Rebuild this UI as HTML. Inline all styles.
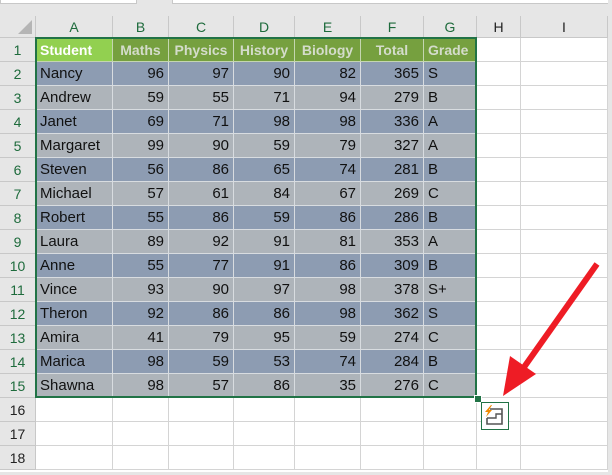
<!DOCTYPE html>
<html><head><style>
body{margin:0;width:612px;height:475px;overflow:hidden;background:#fff;font-family:"Liberation Sans",sans-serif;position:relative}
.top{position:absolute;left:0;top:0;width:612px;height:16px;background:#e6e6e6}
.hdr{position:absolute;top:16px;height:22px;background:#e6e6e6;border-right:1px solid #c8c8c8;border-bottom:1px solid #c8c8c8;box-sizing:border-box;text-align:center;font-size:14px;line-height:22px;color:#222}
.rh{position:absolute;left:0;width:36px;height:24px;background:#e6e6e6;border-bottom:1px solid #c8c8c8;border-right:1px solid #c8c8c8;box-sizing:border-box;text-align:center;font-size:14px;line-height:24px;color:#222}
.sel{color:#1e6b3c}
.c{position:absolute;height:24px;box-sizing:border-box;border-right:1px solid #d4d4d4;border-bottom:1px solid #d4d4d4;font-size:15px;line-height:24px;padding:0 4px;white-space:nowrap;overflow:hidden;color:#111}
.r{text-align:right}
.ctr{text-align:center;padding:0}
</style></head><body>
<div class="top"><div style="position:absolute;left:0;top:0;width:135px;height:3px;border:1px solid #c8c8c8;border-top:none;background:#fff"></div><div style="position:absolute;left:172px;top:0;width:440px;height:3px;border:1px solid #c8c8c8;border-top:none;background:#fff"></div></div>
<div class="hdr" style="left:0;width:36px"><div style="position:absolute;right:3px;bottom:3px;width:0;height:0;border-left:14px solid transparent;border-bottom:14px solid #b5b5b5"></div></div>
<div id="g"></div>
<script>
const cols=[[36,113,'A'],[113,169,'B'],[169,234,'C'],[234,295,'D'],[295,361,'E'],[361,424,'F'],[424,477,'G'],[477,521,'H'],[521,608,'I']];
const data=[["Student","Maths","Physics","History","Biology","Total","Grade"],
["Nancy",96,97,90,82,365,"S"],["Andrew",59,55,71,94,279,"B"],["Janet",69,71,98,98,336,"A"],["Margaret",99,90,59,79,327,"A"],["Steven",56,86,65,74,281,"B"],["Michael",57,61,84,67,269,"C"],["Robert",55,86,59,86,286,"B"],["Laura",89,92,91,81,353,"A"],["Anne",55,77,91,86,309,"B"],["Vince",93,90,97,98,378,"S+"],["Theron",92,86,86,98,362,"S"],["Amira",41,79,95,59,274,"C"],["Marica",98,59,53,74,284,"B"],["Shawna",98,57,86,35,276,"C"]];
let h='';
cols.forEach((c,i)=>{h+=`<div class="hdr ${i<7?'sel':''}" style="left:${c[0]}px;width:${c[1]-c[0]}px">${c[2]}</div>`});
for(let r=0;r<18;r++){const y=38+r*24;
h+=`<div class="rh ${r<15?'sel':''}" style="top:${y}px">${r+1}</div>`;
cols.forEach((c,i)=>{let bg='#fff',txt='',cls='c',st='';
if(r<15&&i<7){txt=data[r][i];
 if(r==0){bg=i==0?'#92d050':'#76a03f';st='font-weight:bold;font-size:14px;color:'+(i==0?'#fff':'#d4dccb')+';border-color:#c4d6b0;';if(i>0&&i<6)cls+=' ctr';}
 else{bg=r%2==1?'#8d9cb2':'#aeb4ba';st='border-color:#d8dce0;';if(i>0&&i<6)cls+=' r';}
}
h+=`<div class="${cls}" style="left:${c[0]}px;top:${y}px;width:${c[1]-c[0]}px;background:${bg};${st}">${txt}</div>`;});}
document.getElementById('g').innerHTML=h;
</script>
<div style="position:absolute;left:35px;top:37px;width:442px;height:361px;border:2px solid #217346;box-sizing:border-box"></div>
<div style="position:absolute;left:474px;top:395px;width:6px;height:6px;background:#217346;border:1px solid #fff"></div>
<div style="position:absolute;left:608px;top:0;width:4px;height:475px;background:#e6e6e6"></div>
<div style="position:absolute;left:0;top:472px;width:612px;height:3px;background:#e6e6e6"></div>
<div style="position:absolute;left:481px;top:402px;width:28px;height:28px;border:1px solid #217346;box-sizing:border-box;background:#fff">
<svg width="26" height="26" viewBox="0 0 26 26" style="position:absolute;left:0;top:0"><path d="M8 6h12v15H5v-6" fill="none" stroke="#555" stroke-width="1.6"/><path d="M5 15h9v-4h6" fill="none" stroke="#555" stroke-width="1.4"/><path d="M9 2l-6 7h3l-2 5 6-7h-3l3-5z" fill="#f08a00"/></svg></div>
<svg width="612" height="475" style="position:absolute;left:0;top:0;pointer-events:none"><line x1="597" y1="264" x2="522" y2="370" stroke="#ee1c25" stroke-width="6"/><polygon points="503,396 510,356 536,374" fill="#ee1c25"/></svg>
</body></html>
